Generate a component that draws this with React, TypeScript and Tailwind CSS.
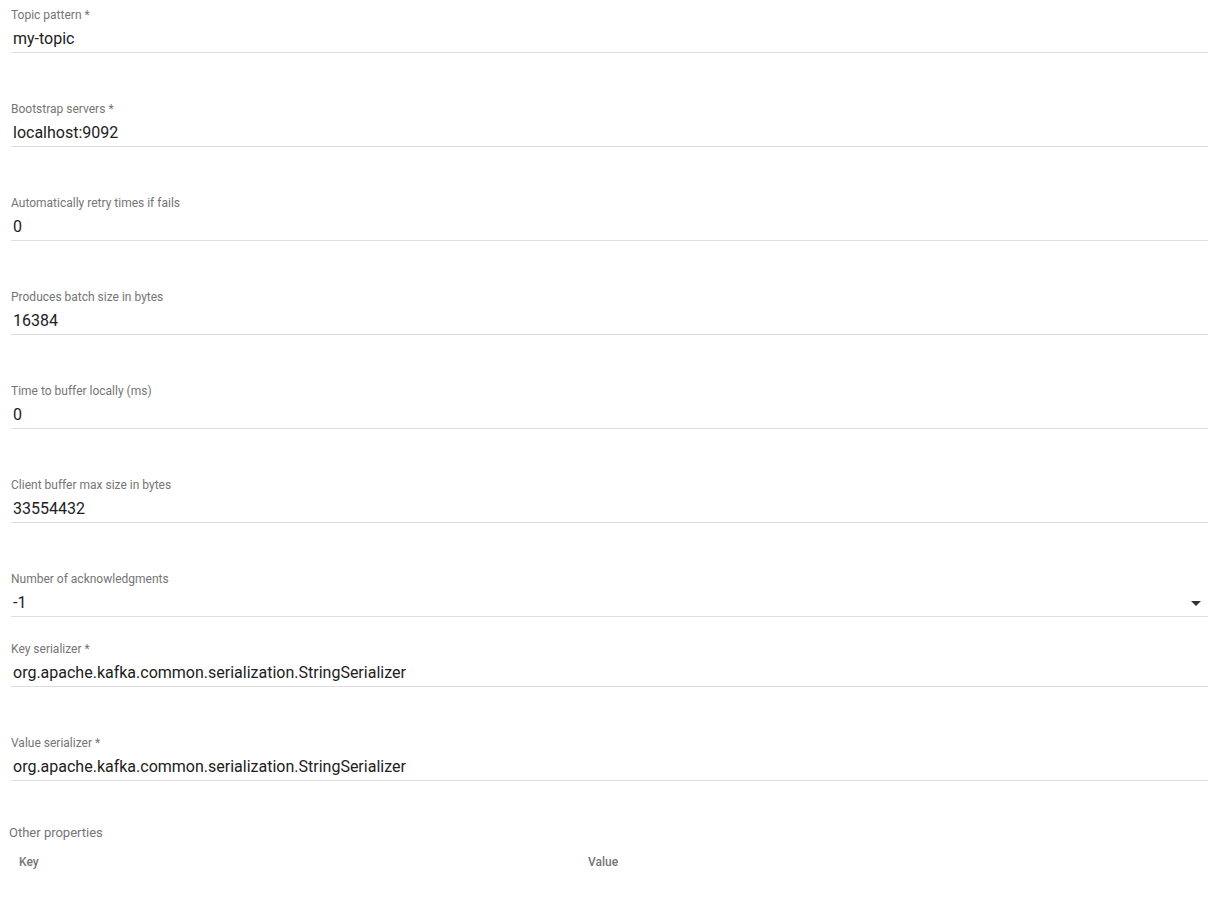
import type { FC } from 'react'

interface FieldProps {
  label: string
  value: string
  required?: boolean
}

const TextField: FC<FieldProps> = ({ label, value, required }) => (
  <div className="mb-[41px] flex flex-col">
    <label className="h-4 text-[12px] leading-4 text-[#757575]">
      {label}
      {required ? <span className="ml-[3px]">*</span> : null}
    </label>
    <div className="border-b border-[#dedede] pt-[6px] pb-[4px] pl-[2px] text-[16px] leading-[19px] text-[#212121]">
      {value}
    </div>
    <div className="h-[7px]" />
  </div>
)

const SelectField: FC<FieldProps> = ({ label, value }) => (
  <div className="mb-[24px] flex flex-col">
    <label className="h-4 text-[12px] leading-4 text-[#757575]">{label}</label>
    <div className="flex items-center justify-between border-b border-[#dedede] pt-[6px] pb-[4px] pl-[2px] text-[16px] leading-[19px] text-[#212121]">
      <span>{value}</span>
      <svg viewBox="7 10 10 5" className="mt-[2px] mr-[7px] h-[5px] w-[10px] text-[#333]" fill="currentColor">
        <path d="M7 10l5 5 5-5z" />
      </svg>
    </div>
  </div>
)

export default function App() {
  return (
    <div
      className="min-h-screen bg-white pt-[7px] pr-[6px] pl-[11px]"
      style={{ fontFamily: 'Roboto, "Liberation Sans", sans-serif' }}
    >
      <TextField label="Topic pattern" value="my-topic" required />
      <TextField label="Bootstrap servers" value="localhost:9092" required />
      <TextField label="Automatically retry times if fails" value="0" />
      <TextField label="Produces batch size in bytes" value="16384" />
      <TextField label="Time to buffer locally (ms)" value="0" />
      <TextField label="Client buffer max size in bytes" value="33554432" />
      <SelectField label="Number of acknowledgments" value="-1" />
      <TextField
        label="Key serializer"
        value="org.apache.kafka.common.serialization.StringSerializer"
        required
      />
      <TextField
        label="Value serializer"
        value="org.apache.kafka.common.serialization.StringSerializer"
        required
      />
      <div className="-mt-[4px] -ml-[2px]">
        <div className="text-[13px] leading-4 text-[#757575]">Other properties</div>
        <table className="mt-[7px] w-[1138px] table-fixed border-collapse">
          <thead>
            <tr>
              <th className="px-[10px] py-[6px] text-left text-[12px] font-medium leading-4 text-[#757575]">
                Key
              </th>
              <th className="px-[10px] py-[6px] text-left text-[12px] font-medium leading-4 text-[#757575]">
                Value
              </th>
            </tr>
          </thead>
        </table>
      </div>
    </div>
  )
}
